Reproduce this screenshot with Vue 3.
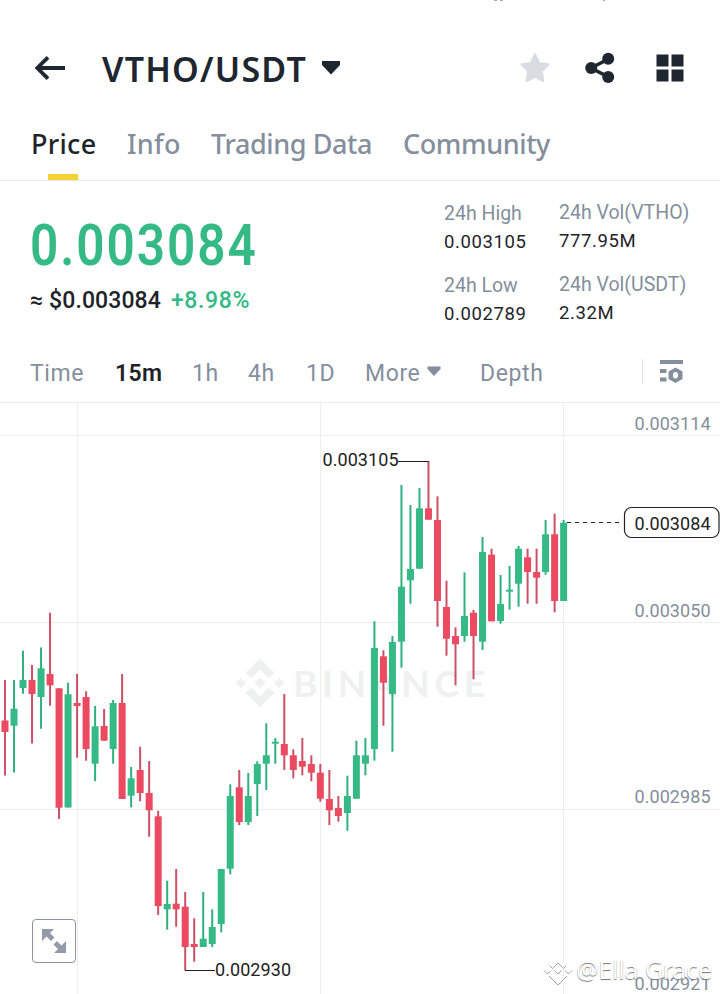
<template>
  <div class="page">
    <header class="topbar">
      <svg class="cut" width="120" height="2" viewBox="0 0 120 2">
        <path d="M4 0h3v1h-3zM10 0h3v1h-3zM113 0h2v1h-2z" fill="#aaa" />
      </svg>
      <svg class="back" width="32" height="26" viewBox="0 0 32 26">
        <path d="M31 13H3M14 2.300L3.300 13L14 23.700" fill="none" stroke="#1e2630" stroke-width="3.800" />
      </svg>
      <h1>VTHO/USDT</h1>
      <svg class="caret" width="20" height="16" viewBox="0 0 20 16">
        <path d="M1 1h18v4l-9 9.500l-9-9.500z" fill="#1e2630" />
      </svg>
      <div class="actions">
        <svg width="32" height="32" viewBox="0 0 32 32">
          <path
            d="M16 2.500L20.100 11.200L29.200 12.500L22.500 19.200L24.200 28.800L16 24.400L7.800 28.800L9.500 19.200L2.800 12.500L11.900 11.200Z"
            fill="#d9dce1" stroke="#d9dce1" stroke-width="2.500" stroke-linejoin="round" />
        </svg>
        <svg width="30" height="32" viewBox="0 0 30 32">
          <path d="M23.500 7L6 16L23.500 25" fill="none" stroke="#1e2630" stroke-width="3.600" />
          <circle cx="23.200" cy="6.700" r="6" fill="#1e2630" />
          <circle cx="6.200" cy="16" r="6" fill="#1e2630" />
          <circle cx="23.200" cy="25" r="6" fill="#1e2630" />
        </svg>
        <svg width="28" height="28" viewBox="0 0 28 28">
          <path d="M.5.500h12v12h-12zM15.500.500h12v12h-12zM.5 15.500h12v12h-12zM15.500 15.500h12v12h-12z" fill="#1e2630" />
        </svg>
      </div>
    </header>

    <nav class="tabs">
      <a v-for="tab in tabs" :key="tab.name" :class="['tab', tab.cls, { active: tab.name === activeTab }]" @click="activeTab = tab.name">{{ tab.name }}</a>
    </nav>

    <section class="summary">
      <div class="last">
        <div class="price">0.003084</div>
        <div class="fiat"><span class="usd">≈ $0.003084</span><span class="change">+8.98%</span></div>
      </div>
      <div class="stats high-low">
        <div class="label">24h High</div>
        <div class="value">0.003105</div>
        <div class="label">24h Low</div>
        <div class="value">0.002789</div>
      </div>
      <div class="stats volume">
        <div class="label">24h Vol(VTHO)</div>
        <div class="value">777.95M</div>
        <div class="label">24h Vol(USDT)</div>
        <div class="value">2.32M</div>
      </div>
    </section>

    <div class="intervals">
      <span class="time">Time</span>
      <span class="m15">15m</span>
      <span class="h1">1h</span>
      <span class="h4">4h</span>
      <span class="d1">1D</span>
      <span class="more">More</span>
      <svg class="small-caret" width="14" height="11" viewBox="0 0 14 11">
        <path d="M.5.500h13v2.500l-6.500 7l-6.500-7z" fill="#848e9c" />
      </svg>
      <span class="depth">Depth</span>
      <i class="sep"></i>
      <svg class="settings" width="25" height="25" viewBox="0 0 25 25">
        <path d="M1 1h23v4H1zM1 10h6.500v4H1zM1 18.500h6.500v4H1z" fill="#848e9c" />
        <path d="M16.500 8.500l7 4v7.500l-7 4l-7-4v-7.500z" fill="#848e9c" />
        <ellipse cx="16.500" cy="16.200" rx="2.500" ry="3.200" fill="#fff" />
      </svg>
    </div>

    <div class="chart">
      <svg width="720" height="592" viewBox="0 402 720 592">
        <g fill="#eff0f0">
          <g transform="translate(260 683)">
            <path d="M0-24.500L14.500-10l-5.500 5.500l-9-9l-9 9l-5.500-5.500z" />
            <path d="M0 24.500L14.500 10l-5.500-5.500l-9 9l-9-9l-5.500 5.500z" />
            <path d="M0-5.500L5.500 0L0 5.500L-5.500 0zM-19-5L-14 0L-19 5L-24 0zM19-5L24 0L19 5L14 0z" />
          </g>
          <text x="293" y="697" class="brand" textLength="192">BINANCE</text>
        </g>

        <path d="M0 435.500H720M0 622.500H720M0 809.500H720M77.500 403V994M320.500 403V994M563.500 403V994" stroke="#ededee" />

        <g v-for="(c, i) in candles" :key="i">
          <rect :x="x(i) - 1" :y="c[1]" width="2" :height="c[4] - c[1]" :fill="c[0] ? '#2fb17f' : '#cc5067'" />
          <rect :x="x(i) - 3.500" :y="c[2]" width="7" :height="c[3] - c[2]" :fill="c[0] ? '#35b987' : '#ec4a60'" />
        </g>

        <path d="M398 461.500H429M185 970.500H215" stroke="#222" stroke-width="1.200" />
        <path d="M567 522.500H620" stroke="#222" stroke-width="1.200" stroke-dasharray="4 4" />
        <text x="322.500" y="466" textLength="76" class="mark">0.003105</text>
        <text x="215" y="976" textLength="76" class="mark">0.002930</text>

        <text v-for="a in axis" :key="a.label" x="634.500" :y="a.y" textLength="76" class="axis">{{ a.label }}</text>

        <rect x="624.500" y="507.500" width="94.500" height="30" rx="7" fill="#fff" stroke="#222" stroke-width="1.200" />
        <text x="634.500" y="530" textLength="76" class="mark">0.003084</text>

        <g class="author">
          <g fill="none" stroke="#fff" stroke-width="4">
            <path d="M549 968l9-9l9 9M549 976l9 9l9-9M546 972l2 1M570 972l-2 1M555 971l3 3l3-3" />
          </g>
          <path d="M549.500 965.500l3 3l5.500-5.500l5.500 5.500l3-3M544 970.500l3.500 3.500l3.500-3.500M554.500 970.500l3.500 3.500l3.500-3.500M565 970.500l3.500 3.500l3.500-3.500M549 976l9 9l9-9" fill="none" stroke="#a3a4a6" />
          <text x="576" y="979" textLength="136" class="signature">@Ella Grace</text>
        </g>
      </svg>
      <button class="expand">
        <svg width="26" height="26" viewBox="0 0 26 26">
          <path d="M1 1h12l-4 4l4.500 4.500l-3.500 3.500l-4.500-4.500l-4.500 4.500zM25 25h-12l4-4l-4.500-4.500l3.500-3.500l4.500 4.500l4.500-4.500z" fill="#929ba7" />
        </svg>
      </button>
    </div>
  </div>
</template>

<script setup>
  import { ref } from 'vue';

  const activeTab = ref('Price')
  const tabs = [
    { name: 'Price', cls: 't-price' },
    { name: 'Info', cls: 't-info' },
    { name: 'Trading Data', cls: 't-data' },
    { name: 'Community', cls: 't-community' }
  ]

  const axis = [
    { label: '0.003114', y: 430 },
    { label: '0.003050', y: 617 },
    { label: '0.002985', y: 803 },
    { label: '0.002921', y: 990 }
  ]

  // rising, high, body top, body bottom, low
  const candles = [
    [0, 680, 720.5, 732, 775.5],
    [1, 680, 708.7, 725.7, 772.5],
    [1, 650.7, 680, 688, 693.7],
    [0, 665, 680, 694, 743.5],
    [1, 647.5, 668.3, 697, 728.7],
    [0, 612.7, 674, 685.3, 705.7],
    [0, 688.3, 688.3, 807.7, 819],
    [1, 682.7, 694.3, 807.5, 807.5],
    [0, 674, 703, 706, 757.7],
    [0, 691.3, 697, 749, 760.7],
    [1, 706, 726.3, 763.7, 781],
    [0, 709, 726, 740.7, 740.7],
    [1, 700, 703, 749, 763.7],
    [0, 674, 703, 799, 799],
    [1, 767, 778.3, 795.7, 807.3],
    [0, 746.7, 770, 793, 801.3],
    [0, 761, 793, 810.3, 836.7],
    [0, 810.7, 816.3, 906, 915],
    [1, 880.7, 904, 909.3, 929.7],
    [0, 869, 903.7, 909.3, 926.7],
    [0, 892, 906.7, 947, 970.5],
    [0, 918.3, 944, 947, 961.7],
    [1, 892, 938.7, 947, 947],
    [1, 909.3, 927, 944, 947],
    [1, 869, 869, 924, 932.3],
    [1, 784.3, 796, 868.7, 874.3],
    [0, 770, 787.3, 822, 825],
    [1, 773, 796, 822, 825],
    [1, 761.3, 764, 784, 816],
    [1, 723.3, 755.3, 763.7, 790],
    [1, 738, 741.7, 743.7, 763.7],
    [0, 694, 744, 755.3, 770],
    [0, 749.3, 755.3, 770, 778.3],
    [0, 738, 761, 766.7, 775.3],
    [0, 755.3, 764, 772.7, 781.3],
    [0, 764, 772.7, 798.7, 801.7],
    [0, 770, 799, 810.3, 825],
    [0, 796, 808, 816, 821.7],
    [1, 775.7, 796, 813, 830.7],
    [1, 740.7, 755.3, 798.7, 798.7],
    [1, 738, 755.3, 763.7, 775.3],
    [1, 621.3, 648, 749, 760.7],
    [0, 650.3, 656.3, 682.7, 725.7],
    [1, 636, 642, 694, 751.7],
    [1, 485, 586.7, 641.7, 667.7],
    [1, 505, 569, 580.3, 603.7],
    [1, 488, 508.3, 568.7, 568.7],
    [0, 461.3, 508.3, 519.7, 519.7],
    [0, 496.3, 520, 601, 626.7],
    [0, 580.7, 607, 638.7, 655.7],
    [0, 627.3, 636, 644.3, 685.3],
    [1, 572.3, 616, 636, 641.7],
    [0, 610, 612.7, 636, 679.3],
    [1, 537, 552, 641.7, 650],
    [0, 548.7, 554.7, 621.3, 621.3],
    [1, 575, 604, 621, 623.7],
    [1, 566, 589.7, 591.7, 609.7],
    [1, 546, 548.7, 583.7, 606.7],
    [0, 548.7, 557.3, 572, 603.7],
    [0, 548.7, 572, 577.7, 603.7],
    [1, 520, 534.3, 572, 574.7],
    [0, 513.7, 534.3, 601, 612.3],
    [1, 520, 522.7, 601, 601]
  ]

  const x = (i) => 5 + i * 9.01
</script>

<style>
body {
  margin: 0;
  background: #fff;
}
</style>

<style scoped>
.page {
  width: 720px;
  height: 994px;
  overflow: hidden;
  background: #fff;
  color: #1e2329;
  font-family: Roboto, "Liberation Sans", sans-serif;
  white-space: nowrap;
}

.topbar {
  position: relative;
  display: flex;
  align-items: center;
  height: 110px;
  padding: 26px 36px 0 34px;
  box-sizing: border-box;
}

.cut {
  position: absolute;
  top: 0;
  left: 490px;
}

h1 {
  margin: 2px 0 0 36px;
  width: 205px;
  color: #1e2630;
  font: 600 34px/46px "Noto Sans", sans-serif;
  letter-spacing: 1.2px;
}

.caret {
  margin-left: 14px;
}

.actions {
  display: flex;
  align-items: center;
  margin-left: auto;
}

.actions svg + svg {
  margin-left: 34px;
}

.actions svg:last-child {
  margin-left: 41px;
}

.tabs {
  display: flex;
  height: 71px;
  padding-left: 31px;
  box-sizing: border-box;
  border-bottom: 1px solid #e8e9eb;
  color: #848e9c;
  font: 500 27px/68px "Noto Sans", sans-serif;
}

.tab {
  position: relative;
}

.t-price { width: 96px; letter-spacing: 0.3px; }
.t-info { width: 84px; letter-spacing: 0.3px; }
.t-data { width: 192px; letter-spacing: -0.4px; }
.t-community { letter-spacing: -0.4px; }

.active {
  color: #1e2329;
}

.active::after {
  content: "";
  position: absolute;
  left: 17px;
  bottom: 0;
  width: 30px;
  height: 6px;
  background: #f5d033;
}

.summary {
  display: flex;
  height: 162px;
}

.last {
  width: 414px;
  padding: 32px 0 0 30px;
  box-sizing: content-box;
}

.price {
  color: #35b987;
  font-size: 57px;
  font-weight: 600;
  line-height: 66px;
  letter-spacing: 2.2px;
  transform: scaleX(0.87);
  transform-origin: left;
}

.fiat {
  display: flex;
  margin-top: 8px;
  font-size: 23px;
  font-weight: 500;
  line-height: 28px;
}

.usd {
  width: 141px;
  letter-spacing: 0.1px;
}

.change {
  color: #35b987;
  letter-spacing: 0.6px;
}

.high-low {
  width: 115px;
  padding-top: 19px;
}

.volume {
  padding-top: 18px;
}

.label {
  color: #848e9c;
  font-size: 19.500px;
  line-height: 28px;
  letter-spacing: 0;
}

.value {
  margin-bottom: 16px;
  font-size: 18.500px;
  line-height: 28px;
  letter-spacing: 0.6px;
}

.intervals {
  display: flex;
  align-items: center;
  height: 60px;
  padding-left: 30px;
  box-sizing: border-box;
  border-bottom: 1px solid #ececee;
  color: #848e9c;
  font-size: 23px;
  letter-spacing: 0.6px;
}

.intervals span {
  padding-top: 2px;
}

.time { width: 85px; }
.m15 { width: 77px; color: #1e2329; font-weight: 600; letter-spacing: 0.3px; }
.h1 { width: 56px; }
.h4 { width: 58px; }
.d1 { width: 59px; }
.more { width: 62px; }
.depth { width: 162px; margin-left: 39px; }

.small-caret {
  margin-top: -2px;
}

.sep {
  width: 1px;
  height: 25px;
  margin-top: -2px;
  background: #e3e5e8;
}

.settings {
  margin: -2px 0 0 16px;
}

.chart {
  position: relative;
  height: 592px;
  margin-top: -1px;
}

.chart > svg {
  display: block;
}

.brand {
  font: 700 37px Lato, sans-serif;
}

.mark {
  fill: #222;
  font-size: 18px;
}

.axis {
  fill: #848e9c;
  font-size: 18px;
}

.signature {
  fill: #fff;
  font: 400 25px "Noto Sans", sans-serif;
  text-shadow: 0 1px 1px #777;
}

.expand {
  position: absolute;
  left: 32px;
  top: 517px;
  display: flex;
  align-items: center;
  justify-content: center;
  width: 44px;
  height: 44px;
  padding: 0;
  border: 1px solid #8c949f;
  border-radius: 4px;
  background: #fff;
}
</style>
